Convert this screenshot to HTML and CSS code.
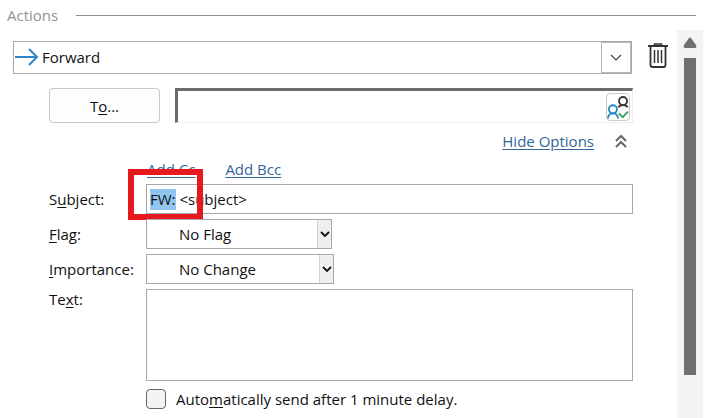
FILE: index.html
```html
<!DOCTYPE html>
<html lang="en">
<head>
<meta charset="utf-8">
<title>Actions</title>
<link rel="stylesheet" href="styles.css">
</head>
<body>
<header class="section-head">
  <h1 class="section-title">Actions</h1>
  <span class="rule"></span>
</header>
<div class="pane">
  <main class="form">
    <div class="action-row">
      <div class="pick pick-action">
        <svg class="forward-icon" width="24" height="18" viewBox="0 0 24 18"><path d="M0 9H22M14 1L22 9L14 17" fill="none" stroke="#2b87c8" stroke-width="2"/></svg>
        <select class="select" aria-label="Action"><option>Forward</option></select>
        <span class="arrow"><svg width="12" height="8" viewBox="0 0 12 8"><path d="M1 1L6 6L11 1" fill="none" stroke="#444" stroke-width="1.200"/></svg></span>
      </div>
      <button class="icon-button" type="button" aria-label="Delete action">
        <svg width="20" height="26" viewBox="0 0 20 26" fill="none" stroke="#333"><path d="M0 3H20" stroke-width="2"/><path d="M6.500 2V1H13.500V2" stroke-width="1.500"/><path d="M2.500 3V22Q2.500 24 4.500 24H15.500Q17.500 24 17.500 22V3" stroke-width="1.800"/><path d="M6.500 7V20M10 7V20M13.500 7V20" stroke-width="1.500"/></svg>
      </button>
    </div>

    <div class="details">
      <div class="to-row">
        <button class="to-button" type="button">T<u>o</u>...</button>
        <div class="to-field">
          <input class="to-input" type="text" aria-label="To">
          <button class="people" type="button" aria-label="Check names">
            <svg width="22" height="26" viewBox="0 0 24 27" fill="none"><g stroke="#3c3435" stroke-width="2"><circle cx="17.500" cy="7" r="4.400"/><path d="M12.500 14Q13.500 11.500 17.500 11.500T22.500 14"/></g><g stroke="#2389c9" stroke-width="2"><circle cx="6.500" cy="16" r="4.400"/><path d="M1 26Q1.500 20.500 6.500 20.500T12 26"/></g><path d="M13 20.500L17 24.500L23 18.500" stroke="#3a9d5d" stroke-width="2"/></svg>
          </button>
        </div>
      </div>

      <div class="options-row">
        <a class="link" href="#options">Hide Options</a>
        <svg width="12" height="14" viewBox="0 0 12 14"><path d="M1 7L6 2L11 7M1 13L6 8L11 13" fill="none" stroke="#666" stroke-width="2"/></svg>
      </div>

      <div class="fields">
        <div class="copy-links">
          <a class="link" href="#cc">Add Cc</a>
          <a class="link" href="#bcc">Add Bcc</a>
        </div>

        <label for="subject">S<u>u</u>bject:</label>
        <div class="subject-field">
          <input class="box subject" id="subject" type="text" value="FW: &lt;subject&gt;">
          <span class="callout"></span>
        </div>

        <label for="flag"><u>F</u>lag:</label>
        <div class="pick pick-flag">
          <select class="select" id="flag"><option>No Flag</option></select>
          <span class="arrow"><svg width="10" height="7" viewBox="0 0 10 7"><path d="M1 1L5 5L9 1" fill="none" stroke="#111" stroke-width="1.800"/></svg></span>
        </div>

        <label for="importance"><u>I</u>mportance:</label>
        <div class="pick pick-importance">
          <select class="select" id="importance"><option>No Change</option></select>
          <span class="arrow"><svg width="10" height="7" viewBox="0 0 10 7"><path d="M1 1L5 5L9 1" fill="none" stroke="#111" stroke-width="1.800"/></svg></span>
        </div>

        <label class="text-label" for="message">Te<u>x</u>t:</label>
        <textarea class="box message" id="message"></textarea>

        <div class="delay">
          <input class="check" id="delay" type="checkbox">
          <label for="delay">Auto<u>m</u>atically send after 1 minute delay.</label>
        </div>
      </div>
    </div>
  </main>
  <div class="scrollbar">
    <svg width="14" height="12" viewBox="0 0 14 12"><path d="M6 1Q7 0 8 1L13 8Q14 11 12 11H2Q0 11 1 8Z" fill="#707070"/></svg>
    <span class="thumb"></span>
  </div>
</div>
</body>
</html>
```
FILE: styles.css
```css
* {
  box-sizing: border-box;
}

html,
body {
  height: 100%;
}

body {
  margin: 0;
  display: flex;
  flex-direction: column;
  overflow: hidden;
  background: #fff;
  color: #111;
  font: 15px/20px "Open Sans", "Noto Sans", sans-serif;
}

input,
select,
button,
textarea {
  margin: 0;
  font: inherit;
  color: inherit;
}

svg {
  display: block;
}

u {
  text-underline-offset: 2px;
}

.section-head {
  display: flex;
  align-items: center;
  gap: 18px;
  height: 30px;
  padding: 0 12px 0 7px;
}

.section-title {
  margin: 0;
  font-size: 15px;
  font-weight: 400;
  color: #929292;
}

.rule {
  flex: 1;
  height: 1px;
  background: #909090;
}

.pane {
  flex: 1;
  display: flex;
  min-height: 0;
  padding-right: 5px;
}

.form {
  flex: 1;
  padding: 11px 9px 0 13px;
}

.action-row {
  display: flex;
  gap: 16px;
}

.pick {
  position: relative;
  display: flex;
  align-items: center;
  border: 1px solid #a8a8a8;
  background: #fff;
}

.select {
  flex: 1;
  height: 28px;
  padding: 0 32px;
  border: 0;
  background: transparent;
  appearance: none;
}

.arrow {
  position: absolute;
  top: 0;
  right: 0;
  bottom: 0;
  display: flex;
  align-items: center;
  justify-content: center;
  width: 14px;
  border-left: 1px solid #d4d4d4;
  background: #efefef;
  pointer-events: none;
}

.pick-action {
  flex: 1;
  height: 33px;
}

.pick-action .select {
  padding: 0 32px 2px 3px;
}

.pick-action .arrow {
  width: 30px;
  border: 1px solid #b8b8b8;
  background: #fff;
}

.forward-icon {
  margin: 0 0 2px 1px;
}

.icon-button {
  display: flex;
  align-items: center;
  padding: 0 0 4px;
  border: 0;
  background: transparent;
}

.details {
  padding: 14px 35px 0 36px;
}

.to-row {
  display: flex;
  gap: 15px;
}

.to-button {
  width: 111px;
  height: 35px;
  border: 1px solid #c8c8c8;
  border-radius: 4px;
  background: #fdfdfd;
}

.to-field {
  flex: 1;
  display: flex;
  align-items: center;
  height: 35px;
  padding-right: 2px;
  border: 1px solid #eee;
  border-top: 3px solid #6b6b6b;
  border-left: 3px solid #6b6b6b;
}

.to-input {
  flex: 1;
  min-width: 0;
  height: 30px;
  border: 0;
  outline: 0;
  background: transparent;
}

.people {
  padding: 0;
  border: 1px solid #ccc;
  border-radius: 4px;
  background: #fff;
}

.link {
  color: #336699;
  text-underline-offset: 2px;
}

.options-row {
  display: flex;
  justify-content: flex-end;
  align-items: center;
  gap: 21px;
  height: 36px;
  padding-right: 6px;
}

.fields {
  display: grid;
  grid-template-columns: 97px 1fr;
  align-items: center;
  row-gap: 5px;
}

.copy-links {
  grid-column: 2;
  display: flex;
  gap: 30px;
  padding-left: 1px;
}

.box {
  display: block;
  width: 100%;
  border: 1px solid #a8a8a8;
  border-radius: 0;
  background: #fff;
  outline: 0;
}

.subject-field {
  position: relative;
}

.subject {
  height: 30px;
  padding: 0 3px;
  background: linear-gradient(#93c6ef, #93c6ef) 3px 4px / 26px 21px no-repeat #fff;
}

.callout {
  position: absolute;
  top: -15px;
  left: -18px;
  width: 75px;
  height: 51px;
  border: 6px solid #e5191e;
  pointer-events: none;
}

.pick-flag {
  width: 186px;
}

.pick-importance {
  width: 188px;
}

.text-label {
  align-self: start;
}

.message {
  height: 92px;
  resize: none;
}

.delay {
  grid-column: 2;
  display: flex;
  align-items: center;
  gap: 10px;
  padding-top: 3px;
}

.check {
  width: 20px;
  height: 20px;
  border: 1px solid #666;
  border-radius: 4px;
  background: #f3f3f3;
  appearance: none;
}

.scrollbar {
  display: flex;
  flex-direction: column;
  align-items: center;
  gap: 9px;
  width: 26px;
  padding-top: 7px;
  background: #f3f3f3;
}

.thumb {
  width: 12px;
  flex: 1;
  margin-bottom: 43px;
  background: #707070;
}
```
